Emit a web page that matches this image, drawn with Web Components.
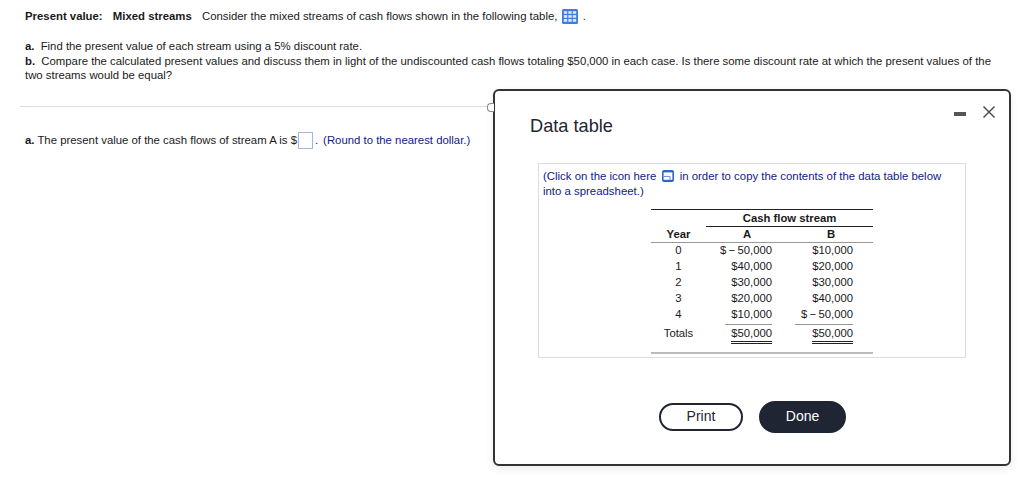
<!DOCTYPE html>
<html>
<head>
<meta charset="utf-8">
<title>Present value: Mixed streams</title>
<style>
html, body { margin: 0; background: #fff; }
body { font: 11.36px/15px "Liberation Sans", Arial, sans-serif; color: #1a1a1a; }
</style>
</head>
<body>
<question-pane>
    <table-icon slot="icon"></table-icon>
</question-pane>
<data-dialog>
    <cash-table></cash-table>
</data-dialog>

<script>
class TableIcon extends HTMLElement {
    constructor() {
        super()
        this.attachShadow({ mode: 'open' }).innerHTML = `
        <style>
        :host { display: inline-block; width: 16px; height: 15px; vertical-align: -4px; margin: 0 2px 0 1px; }
        svg { display: block; }
        </style>
        <svg width="16" height="15" viewBox="0 0 16 15">
            <rect width="16" height="15" rx="1.5" fill="#3f7be0"/>
            <g fill="#dbe7fb">
                <rect x="1.8" y="2.2" width="3.4" height="2.6"/><rect x="6.3" y="2.2" width="3.4" height="2.6"/><rect x="10.8" y="2.2" width="3.4" height="2.6"/>
                <rect x="1.8" y="6.1" width="3.4" height="2.7"/><rect x="6.3" y="6.1" width="3.4" height="2.7"/><rect x="10.8" y="6.1" width="3.4" height="2.7"/>
                <rect x="1.8" y="10" width="3.4" height="2.8"/><rect x="6.3" y="10" width="3.4" height="2.8"/><rect x="10.8" y="10" width="3.4" height="2.8"/>
            </g>
        </svg>`
    }
}
customElements.define('table-icon', TableIcon)

class CopyIcon extends HTMLElement {
    constructor() {
        super()
        this.attachShadow({ mode: 'open' }).innerHTML = `
        <style>
        :host { display: inline-block; width: 12px; height: 12px; vertical-align: -2px; margin: 0 3px 0 2px; }
        svg { display: block; }
        </style>
        <svg width="12" height="12" viewBox="0 0 12 12">
            <rect width="12" height="12" rx="2" fill="#2f66c4"/>
            <rect x="1.6" y="2.4" width="8.8" height="7.4" fill="#fff"/>
            <path d="M1.6 6.4H8V9.8" fill="none" stroke="#5f8ad6" stroke-width="1"/>
        </svg>`
    }
}
customElements.define('copy-icon', CopyIcon)

const questionTemplate = document.createElement('template')
questionTemplate.innerHTML = `
    <style>
    :host { display: block; padding: 9px 20px 0 25px; font: 11.36px/15px "Liberation Sans", Arial, sans-serif; color: #1a1a1a; }
    p { margin: 0; white-space: nowrap; }
    b { font-weight: bold; }
    .head { height: 15px; }
    .head b { margin-right: 7px; }
    .head b + b { margin-right: 7px; }
    .parts { margin-top: 15px; }
    .parts p { line-height: 14.5px; }
    .parts b { margin-right: 3px; }
    .rule { margin: 23px 0 0 -5px; width: 467px; height: 1px; background: #e2dadb; }
    .answer { margin-top: 25px; display: flex; align-items: center; }
    .box { width: 15px; height: 17px; box-sizing: border-box; border: 1px solid #9db7e3; margin: 0 2px 0 1px; }
    .note { color: #10208c; margin-left: 5px; }
    </style>
    <p class="head"><b>Present value:</b> <b>Mixed streams</b> Consider the mixed streams of cash flows shown in the following table, <slot name="icon"></slot> .</p>
    <div class="parts">
        <p><b>a.</b> Find the present value of each stream using a 5% discount rate.</p>
        <p><b>b.</b> Compare the calculated present values and discuss them in light of the undiscounted cash flows totaling $50,000 in each case. Is there some discount rate at which the present values of the</p>
        <p>two streams would be equal?</p>
    </div>
    <div class="rule"></div>
    <div class="answer">
        <span><b>a.</b> The present value of the cash flows of stream A is $</span>
        <span class="box"></span><span>.</span>
        <span class="note">(Round to the nearest dollar.)</span>
    </div>
`
class QuestionPane extends HTMLElement {
    constructor() {
        super()
        this.attachShadow({ mode: 'open' })
        this.shadowRoot.appendChild(questionTemplate.content.cloneNode(true))
    }
}
customElements.define('question-pane', QuestionPane)

class PillButton extends HTMLElement {
    constructor() {
        super()
        this.attachShadow({ mode: 'open' }).innerHTML = `
        <style>
        :host { display: flex; align-items: center; justify-content: center; box-sizing: border-box; border-radius: 16px; font-size: 14px; width: 84px; height: 28px; padding-bottom: 2px; border: 2px solid #1f2533; color: #1f2533; background: #fff; }
        :host([primary]) { width: 87px; height: 32px; background: #1f2533; color: #fff; }
        </style>
        <slot></slot>`
    }
}
customElements.define('pill-button', PillButton)

const rows = [
    ['0', '$\u2009\u2212\u200950,000', '$10,000'],
    ['1', '$40,000', '$20,000'],
    ['2', '$30,000', '$30,000'],
    ['3', '$20,000', '$40,000'],
    ['4', '$10,000', '$\u2009\u2212\u200950,000'],
]

class CashTable extends HTMLElement {
    constructor() {
        super()
        const body = rows.map(r => `
            <div class="year">${r[0]}</div><div class="num a">${r[1]}</div><div class="num b">${r[2]}</div>`).join('')
        this.attachShadow({ mode: 'open' }).innerHTML = `
        <style>
        :host { display: block; width: 222px; font-size: 11.3px; line-height: 15px; color: #1a1a1a; }
        .grid { display: grid; grid-template-columns: 55px 66px 101px; grid-auto-rows: min-content; border-top: 1px solid #222; border-bottom: 2px solid #bbb; }
        .year, .num { height: 16px; }
        .span { grid-column: 2 / 4; text-align: center; font-weight: bold; border-bottom: 1px solid #222; height: 16px; line-height: 16px; }
        .blank { height: 16px; }
        .hd { font-weight: bold; text-align: center; border-bottom: 1px solid #999; height: 15px; line-height: 14px; }
        .year { text-align: center; }
        .num { text-align: right; }
        .b { padding-right: 20px; }
        .hd.b { padding: 0 20px 0 37px; }
        .hd.a { padding: 0 0 0 16px; }
        .total { height: 19px; line-height: 17px; }
        .total span { display: inline-block; height: 16px; border-bottom: 3px double #222; }
        .tail { height: 8px; grid-column: 1 / 4; }
        .over { border-bottom: 1px solid #999; height: 1px; }
        .over.a { margin-left: 19px; }
        .over.b { margin-left: 23px; margin-right: 20px; }
        </style>
        <div class="grid">
            <div class="blank"></div><div class="span">Cash flow stream</div>
            <div class="hd year">Year</div><div class="hd a">A</div><div class="hd b">B</div>
            ${body}
            <div></div><div class="over a"></div><div class="over b"></div>
            <div class="year total">Totals</div>
            <div class="num a total"><span>$50,000</span></div>
            <div class="num b total"><span>$50,000</span></div>
            <div class="tail"></div>
        </div>`
    }
}
customElements.define('cash-table', CashTable)

const dialogTemplate = document.createElement('template')
dialogTemplate.innerHTML = `
    <style>
    :host { position: absolute; left: 493px; top: 89px; width: 518px; height: 377px; box-sizing: border-box; background: #fff; border: 2px solid #333; border-radius: 6px; box-shadow: 0 3px 8px rgba(0,0,0,.08); font: 11.3px/15px "Liberation Sans", Arial, sans-serif; display: flex; flex-direction: column; }
    .knob { position: absolute; left: -8px; top: 12px; width: 6px; height: 7px; border: 1px solid #888; border-right: none; border-radius: 4px 0 0 4px; background: #fff; }
    header { display: flex; justify-content: space-between; padding: 13px 14px 0 35px; height: 60px; box-sizing: border-box; }
    h1 { margin: 11px 0 0; font-size: 18.2px; line-height: 22px; font-weight: normal; color: #1f2533; }
    .controls { display: flex; gap: 17px; align-items: flex-start; }
    .controls .min { margin-top: 8px; }
    .controls .close { margin-top: 2px; }
    svg { display: block; }
    .data { margin: 12px 0 0 43px; width: 428px; height: 195px; box-sizing: border-box; border: 1px solid #ddd; padding: 5px 4px 0; }
    .data p { margin: 0; color: #10208c; font-size: 11.4px; line-height: 15px; white-space: nowrap; }
    .data .wrap { margin: 10px 0 0 108px; }
    footer { display: flex; justify-content: center; align-items: center; gap: 16px; margin: 43px 0 0 1px; }
    </style>
    <div class="knob"></div>
    <header>
        <h1>Data table</h1>
        <div class="controls">
            <svg class="min" width="12" height="4" viewBox="0 0 12 4"><rect width="12" height="4" fill="#555"/></svg>
            <svg class="close" width="12" height="12" viewBox="0 0 12 12"><path d="M.5 .5L11.5 11.5M11.5 .5L.5 11.5" stroke="#444" stroke-width="1.4" fill="none"/></svg>
        </div>
    </header>
    <div class="data">
        <p>(Click on the icon here <copy-icon></copy-icon> in order to copy the contents of the data table below</p>
        <p>into a spreadsheet.)</p>
        <div class="wrap"><slot></slot></div>
    </div>
    <footer>
        <pill-button>Print</pill-button>
        <pill-button primary>Done</pill-button>
    </footer>
`
class DataDialog extends HTMLElement {
    constructor() {
        super()
        this.attachShadow({ mode: 'open' })
        this.shadowRoot.appendChild(dialogTemplate.content.cloneNode(true))
    }
}
customElements.define('data-dialog', DataDialog)
</script>
</body>
</html>
